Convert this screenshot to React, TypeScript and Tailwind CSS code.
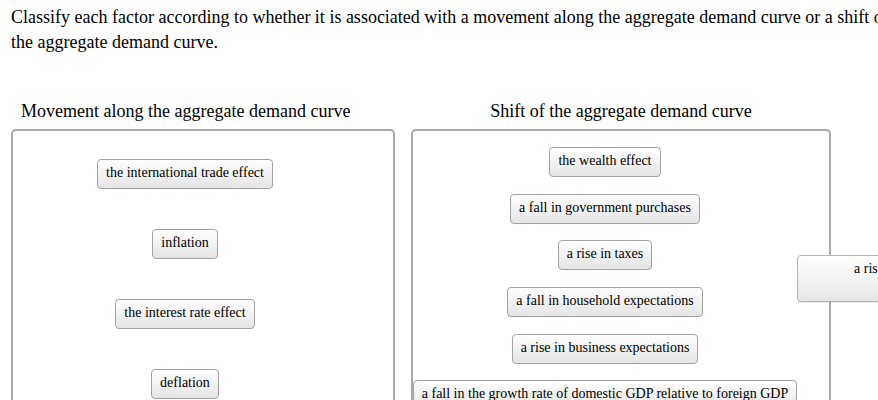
import React from "react";

const alongItems = [
  "the international trade effect",
  "inflation",
  "the interest rate effect",
  "deflation",
];

const shiftItems = [
  "the wealth effect",
  "a fall in government purchases",
  "a rise in taxes",
  "a fall in household expectations",
  "a rise in business expectations",
  "a fall in the growth rate of domestic GDP relative to foreign GDP",
];

function Chip({ label }: { label: string }) {
  return (
    <div className="h-[30px] shrink-0 whitespace-nowrap rounded-[4px] border border-[#a3a3a3] bg-gradient-to-b from-white to-[#e4e4e4] px-2 pt-[5px] text-[14px] leading-[16px] text-black">
      {label}
    </div>
  );
}

export default function App() {
  return (
    <div className="relative h-[400px] w-[878px] overflow-hidden bg-white font-['Liberation_Serif','Times_New_Roman',serif] text-black">
      <p className="whitespace-nowrap pl-[11px] pt-[5px] text-[18px] leading-[25px]">
        Classify each factor according to whether it is associated with a movement along the aggregate demand curve or a shift of
        <br />
        the aggregate demand curve.
      </p>

      <div className="mt-[45px] flex gap-[16px] pl-[11px]">
        {/* Movement column */}
        <div className="flex w-[384px] shrink-0 flex-col">
          <div className="h-[22px] pl-[10px] text-[18px] leading-[22px]">
            Movement along the aggregate demand curve
          </div>
          <div className="mt-[7px] h-[300px] rounded-t-[5px] border-2 border-b-0 border-[#ababab] pt-[28px]">
            <div className="flex w-[344px] flex-col items-center gap-[40px]">
              {alongItems.map((t) => (
                <Chip key={t} label={t} />
              ))}
            </div>
          </div>
        </div>

        {/* Shift column */}
        <div className="flex w-[420px] shrink-0 flex-col">
          <div className="h-[22px] text-center text-[18px] leading-[22px]">
            Shift of the aggregate demand curve
          </div>
          <div className="mt-[7px] h-[300px] rounded-t-[5px] border-2 border-b-0 border-[#ababab] pt-[16px]">
            <div className="flex w-[384px] flex-col items-center gap-[16.67px]">
              {shiftItems.map((t) => (
                <Chip key={t} label={t} />
              ))}
            </div>
          </div>
        </div>
      </div>

      {/* item being dragged */}
      <div className="absolute left-[797px] top-[255px] h-[47px] w-[240px] whitespace-nowrap rounded-[4px] border border-[#b3b3b3] bg-gradient-to-b from-white to-[#e6e6e6] pl-[56px] pt-[5px] text-[14px] leading-[16px] shadow-[0_1px_1px_rgba(0,0,0,0.08)]">
        a rise in the money supply
      </div>
    </div>
  );
}
